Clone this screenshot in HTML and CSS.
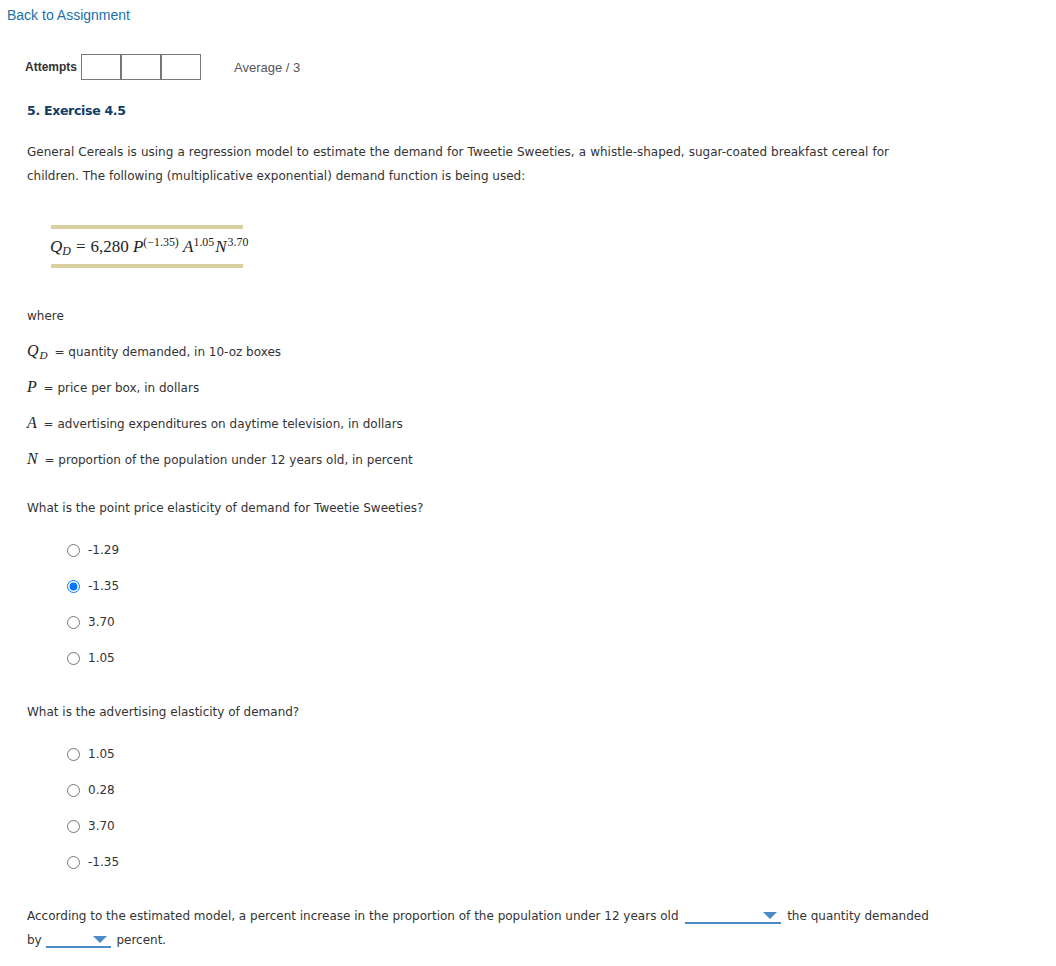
FILE: index.html
```html
<!DOCTYPE html>
<html lang="en">
<head>
  <meta charset="UTF-8" />
  <title>Exercise 4.5</title>
  <link rel="stylesheet" href="styles.css">
</head>
<body>
  <a class="back-link" href="#">Back to Assignment</a>

  <div class="attempts">
    <span class="attempts-label">Attempts</span>
    <span class="attempt-boxes">
      <span class="box"></span><span class="box"></span><span class="box"></span>
    </span>
    <span class="average">Average / 3</span>
  </div>

  <div class="question">
    <h2 class="title">5. Exercise 4.5</h2>

    <p class="intro">General Cereals is using a regression model to estimate the demand for Tweetie Sweeties, a whistle-shaped, sugar-coated breakfast cereal for children. The following (multiplicative exponential) demand function is being used:</p>

    <div class="equation">
      <span class="math"><i>Q</i><sub><i>D</i></sub><span class="rel">=</span>6,280 <i>P</i><sup>(−1.35)</sup> <i>A</i><sup>1.05</sup><i class="n">N</i><sup class="after-n">3.70</sup></span>
    </div>

    <p class="where">where</p>
    <p class="def"><span class="var"><i>Q</i><sub><i>D</i></sub></span> = quantity demanded, in 10-oz boxes</p>
    <p class="def"><span class="var"><i>P</i></span> = price per box, in dollars</p>
    <p class="def"><span class="var"><i>A</i></span> = advertising expenditures on daytime television, in dollars</p>
    <p class="def"><span class="var"><i>N</i></span> = proportion of the population under 12 years old, in percent</p>

    <p class="prompt">What is the point price elasticity of demand for Tweetie Sweeties?</p>
    <ul class="options">
      <li><label><input type="radio" name="q1"> -1.29</label></li>
      <li><label><input type="radio" name="q1" checked> -1.35</label></li>
      <li><label><input type="radio" name="q1"> 3.70</label></li>
      <li><label><input type="radio" name="q1"> 1.05</label></li>
    </ul>

    <p class="prompt prompt-next">What is the advertising elasticity of demand?</p>
    <ul class="options">
      <li><label><input type="radio" name="q2"> 1.05</label></li>
      <li><label><input type="radio" name="q2"> 0.28</label></li>
      <li><label><input type="radio" name="q2"> 3.70</label></li>
      <li><label><input type="radio" name="q2"> -1.35</label></li>
    </ul>

    <p class="final"><span>According to the estimated model, a percent increase in the proportion of the population under 12 years old</span> <span class="dropdown dropdown-wide"></span> <span>the quantity demanded</span> <span>by</span> <span class="dropdown dropdown-narrow"></span> <span>percent.</span></p>
  </div>
</body>
</html>
```

FILE: styles.css
```css
body {
  margin: 0;
  font-family: "DejaVu Sans", Verdana, sans-serif;
  font-size: 12px;
  color: #333;
  background-color: #fff;
}
.back-link {
  display: block;
  padding-left: 7px;
  line-height: 30px;
  font-family: "Liberation Sans", Arial, sans-serif;
  font-size: 14px;
  color: #2170a8;
  text-decoration: none;
}
.attempts {
  display: flex;
  align-items: center;
  height: 26px;
  margin-top: 24px;
  padding-left: 25px;
  font-family: "Liberation Sans", Arial, sans-serif;
  font-size: 12px;
}
.attempts-label {
  font-weight: bold;
  color: #333;
  margin-right: 4px;
}
.attempt-boxes {
  display: flex;
  margin-right: 33px;
}
.box {
  width: 40px;
  height: 26px;
  box-sizing: border-box;
  border: 1px solid #777;
}
.average {
  font-size: 13px;
  color: #555;
}
.question {
  width: 913px;
  padding-left: 27px;
}
.title {
  margin: 21px 0 0;
  font-size: 12.5px;
  letter-spacing: -0.3px;
  line-height: 20px;
  color: #0f3c68;
}
.intro {
  width: 862px;
  margin: 19px 0 0;
  line-height: 24px;
  text-align: justify;
}
.equation {
  display: flex;
  align-items: center;
  width: 192px;
  height: 35px;
  margin: 37px 0 0 24px;
  border-top: 4px solid #d9cf9f;
  border-bottom: 4px solid #d9cf9f;
}
.math {
  margin-left: -1px;
  font-family: "Liberation Serif", "Times New Roman", serif;
  font-size: 17px;
  line-height: 17px;
  color: #222;
  white-space: nowrap;
}
.math .rel {
  margin: 0 5px;
}
.math .n {
  margin-left: 1px;
}
.math .after-n {
  margin-left: 1px;
}
.math sup,
.math sub,
.var sub {
  font-size: 70%;
  line-height: 0;
}
.math sup {
  vertical-align: 0.5em;
}
.math sub,
.var sub {
  vertical-align: -0.25em;
}
.where {
  margin: 36px 0 0;
  line-height: 24px;
}
.def {
  margin: 12px 0 0;
  line-height: 24px;
}
.var {
  display: inline-block;
  padding-right: 2px;
  font-family: "Liberation Serif", "Times New Roman", serif;
  font-size: 16px;
  line-height: 0;
  color: #222;
}
.var i {
  padding-right: 1px;
}
.prompt {
  margin: 24px 0 0;
  line-height: 24px;
}
.prompt-next {
  margin-top: 30px;
}
.options {
  list-style: none;
  margin: 18px 0 0 40px;
  padding: 0;
}
.options li {
  margin-top: 12px;
  line-height: 24px;
}
.options li:first-child {
  margin-top: 0;
}
.options label {
  display: flex;
  align-items: center;
  gap: 4px;
}
.options input {
  width: 13px;
  height: 13px;
  margin: 0 4px 0 0;
}
.final {
  margin: 30px 0 0;
  line-height: 24px;
}
.dropdown {
  position: relative;
  display: inline-block;
  height: 14px;
  border-bottom: 2px solid #4b8ac4;
  vertical-align: -4px;
}
.dropdown::after {
  content: "";
  position: absolute;
  right: 4px;
  top: 4px;
  border-left: 7px solid transparent;
  border-right: 7px solid transparent;
  border-top: 7px solid #4b8ac4;
}
.dropdown-wide {
  width: 96px;
  margin: 0 2px 0 3px;
}
.dropdown-narrow {
  width: 65px;
  margin: 0 2px 0 0;
}
```
